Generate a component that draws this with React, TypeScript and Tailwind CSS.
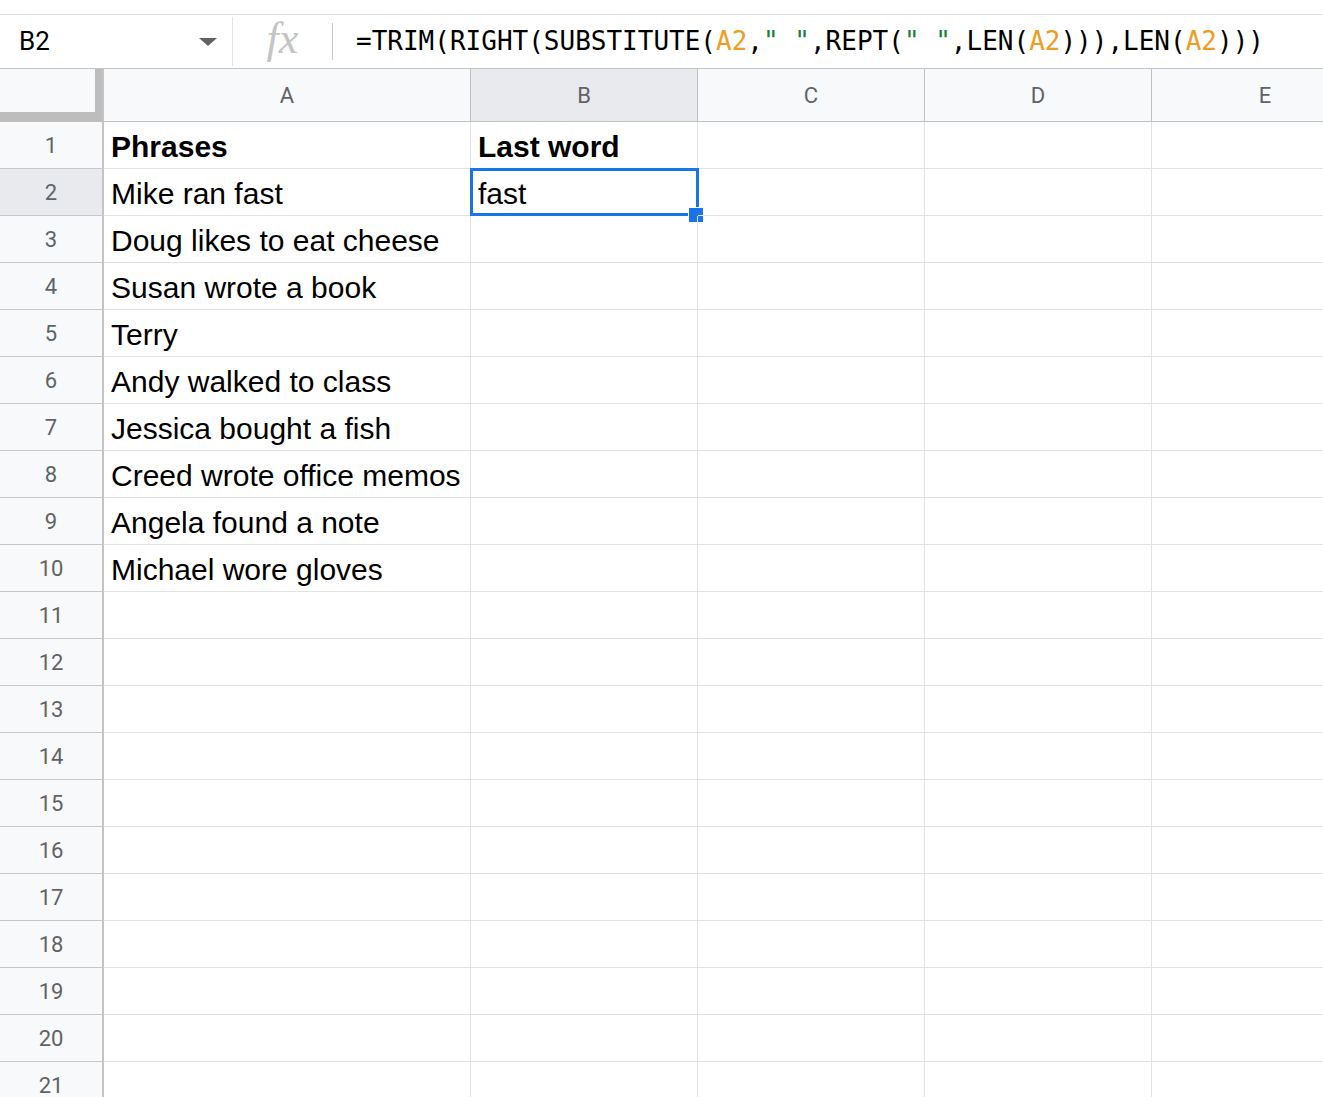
const columns = [
  { label: 'A', w: 'w-[367px]' },
  { label: 'B', w: 'w-[227px]' },
  { label: 'C', w: 'w-[227px]' },
  { label: 'D', w: 'w-[227px]' },
  { label: 'E', w: 'w-[227px]' },
];

const phrases = [
  'Mike ran fast',
  'Doug likes to eat cheese',
  'Susan wrote a book',
  'Terry',
  'Andy walked to class',
  'Jessica bought a fish',
  'Creed wrote office memos',
  'Angela found a note',
  'Michael wore gloves',
];

// formula pieces: [text, colour]
const formula: [string, string][] = [
  ['=TRIM(RIGHT(SUBSTITUTE(', 'text-black'],
  ['A2', 'text-[#f09d1f]'],
  [',', 'text-black'],
  ['" "', 'text-[#188038]'],
  [',REPT(', 'text-black'],
  ['" "', 'text-[#188038]'],
  [',LEN(', 'text-black'],
  ['A2', 'text-[#f09d1f]'],
  [')))' + ',LEN(', 'text-black'],
  ['A2', 'text-[#f09d1f]'],
  [')))', 'text-black'],
];

function FormulaBar() {
  return (
    <div className="flex h-[55px] items-stretch border-t border-b border-t-[#e1e1e1] border-b-[#c4c4c4] bg-white">
      <div className="flex w-[233px] items-center justify-between border-r border-[#e3e3e3] my-[2px] pl-[19px] pr-[15px]">
        <span className="text-[26px] text-black" style={{ fontFamily: 'Roboto, sans-serif' }}>B2</span>
        <svg width="18" height="8" viewBox="0 0 18 8">
          <path d="M0 0 L18 0 L9 8 Z" fill="#5f6368" />
        </svg>
      </div>
      <div className="flex w-[99px] items-center justify-center">
        <span className="text-[44px] italic leading-none text-[#c4c4c4] -mt-[6px]" style={{ fontFamily: '"Liberation Serif", serif' }}>fx</span>
      </div>
      <div className="my-[8px] w-px bg-[#c8c8c8]" />
      <div className="flex items-center pl-[23px] text-[26px] whitespace-pre" style={{ fontFamily: '"DejaVu Sans Mono", monospace' }}>
        {formula.map(([t, c], i) => (
          <span key={i} className={c}>{t}</span>
        ))}
      </div>
    </div>
  );
}

function HeaderRow() {
  return (
    <div className="flex h-[53px] border-b border-[#c0c0c0] text-[22px] text-[#5f6368]" style={{ fontFamily: 'Roboto, sans-serif' }}>
      <div className="relative w-[104px] shrink-0 bg-[#f8f9fa] border-r-2 border-[#c4c4c4]">
        <div className="absolute right-0 top-0 h-full w-[7px] bg-[#bdbdbd]" />
        <div className="absolute bottom-0 left-0 h-[9px] w-full bg-[#bdbdbd]" />
      </div>
      {columns.map(col => (
        <div
          key={col.label}
          className={`${col.w} shrink-0 flex items-center justify-center border-r border-[#c0c0c0] ${col.label === 'B' ? 'bg-[#e8eaed]' : 'bg-[#f8f9fa]'}`}
        >
          {col.label}
        </div>
      ))}
    </div>
  );
}

function Row({ n }: { n: number }) {
  const a = n === 1 ? 'Phrases' : phrases[n - 2] ?? '';
  const b = n === 1 ? 'Last word' : n === 2 ? 'fast' : '';
  const bold = n === 1;
  return (
    <div className="flex h-[47px] shrink-0">
      <div
        className={`w-[104px] shrink-0 flex items-center justify-center border-r-2 border-b border-r-[#c4c4c4] border-b-[#c8c8c8] text-[22px] text-[#5f6368] ${n === 2 ? 'bg-[#e8eaed]' : 'bg-[#f8f9fa]'}`}
        style={{ fontFamily: 'Roboto, sans-serif' }}
      >
        {n}
      </div>
      {columns.map(col => {
        const text = col.label === 'A' ? a : col.label === 'B' ? b : '';
        const selected = col.label === 'B' && n === 2;
        return (
          <div
            key={col.label}
            className={`${col.w} relative shrink-0 flex items-center border-r border-b border-[#e2e2e2] pl-[7px] pt-[2px] text-[30px] text-black ${bold ? 'font-bold' : ''}`}
            style={{ fontFamily: '"Liberation Sans", Arial, sans-serif' }}
          >
            {text}
            {selected && (
              <>
                <div className="absolute -left-[1px] -top-[1px] h-[48px] w-[229px] border-[3px] border-[#1a73e8]" />
                <div className="absolute -right-[6px] -bottom-[7px] h-[15px] w-[15px] border-l border-t border-white bg-[#1a73e8]" />
              </>
            )}
          </div>
        );
      })}
    </div>
  );
}

export default function App() {
  return (
    <div className="h-[1097px] w-[1323px] overflow-hidden bg-white">
      <div className="h-[14px] bg-white" />
      <FormulaBar />
      <HeaderRow />
      {Array.from({ length: 21 }, (_, i) => (
        <Row key={i} n={i + 1} />
      ))}
    </div>
  );
}
